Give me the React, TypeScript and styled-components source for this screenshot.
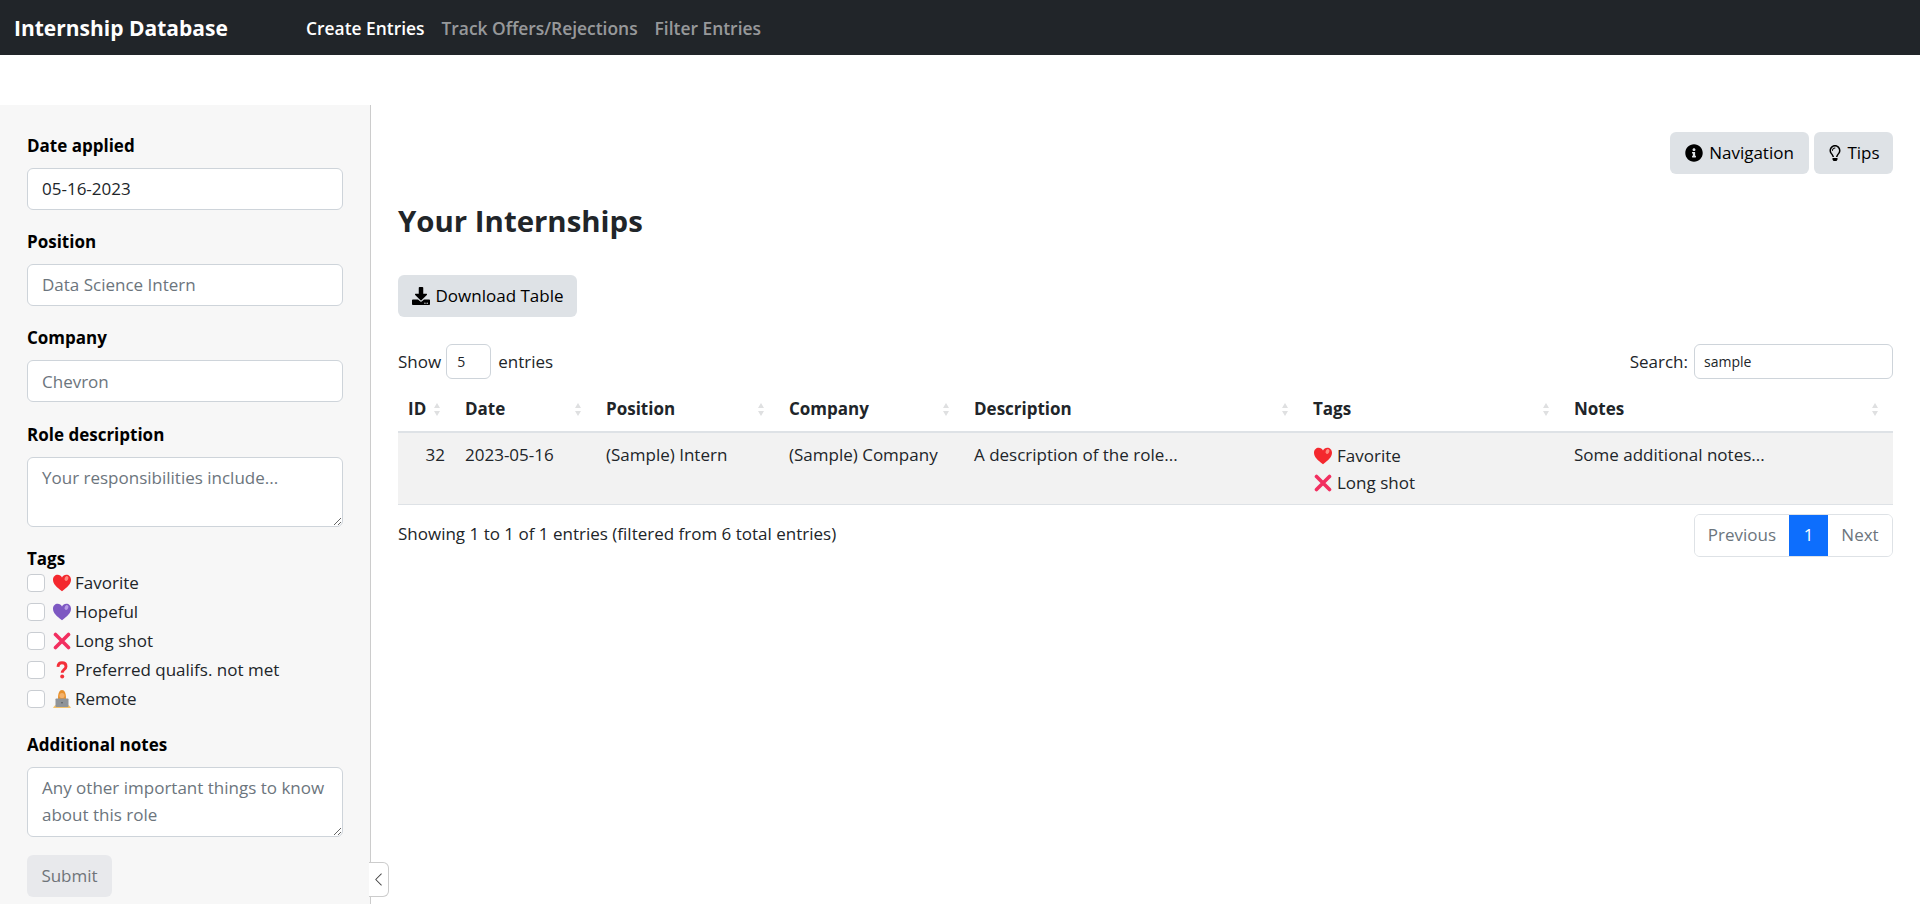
import React from 'react';
import styled, { createGlobalStyle } from 'styled-components';
import { FaDownload, FaInfoCircle, FaRegLightbulb } from 'react-icons/fa';
import { BsChevronLeft } from 'react-icons/bs';

const GlobalStyle = createGlobalStyle`
  html, body {
    margin: 0;
    height: 100%;
    background: #fff;
    overflow: hidden;
  }
  body {
    font-family: "Open Sans", "Noto Sans", sans-serif;
    font-size: 17px;
    line-height: 26px;
    color: #212529;
  }
  * { box-sizing: border-box; }
`;

const Navbar = styled.nav`
  display: flex;
  align-items: center;
  height: 55px;
  padding: 0 14px;
  background: #212529;
`;

const Brand = styled.span`
  width: 292px;
  font-size: 21px;
  font-weight: 700;
  color: #fff;
`;

const NavLink = styled.a<{ $active?: boolean }>`
  margin-right: 17px;
  font-size: 17.4px;
  font-weight: 600;
  color: ${({ $active }) => ($active ? '#fff' : 'rgba(255, 255, 255, 0.55)')};
`;

const Layout = styled.div`
  display: flex;
  height: 799px;
  margin-top: 50px;
`;

const Sidebar = styled.aside`
  position: relative;
  flex: 0 0 371px;
  padding: 27.5px 27px 0;
  background: #f7f7f7;
  border-right: 1px solid #ccc;
`;

const FieldLabel = styled.label`
  display: block;
  margin-bottom: 9px;
  font-size: 17px;
  font-weight: 700;
  color: #000;
`;

const Field = styled.div`
  margin-bottom: 19.4px;
`;

const TextInput = styled.input`
  display: block;
  width: 316px;
  height: 42px;
  padding: 0 14px;
  font: inherit;
  color: #212529;
  background: #fff;
  border: 1px solid #ced4da;
  border-radius: 6px;
  outline: none;

  &::placeholder { color: #6c757d; opacity: 1; }
`;

const TextArea = styled.textarea`
  display: block;
  width: 316px;
  height: 70px;
  padding: 6px 14px;
  font: inherit;
  line-height: 27px;
  color: #212529;
  background: #fff;
  border: 1px solid #ced4da;
  border-radius: 6px;
  outline: none;

  &::placeholder { color: #6c757d; opacity: 1; }
`;

const TagsTitle = styled.div`
  font-size: 17px;
  font-weight: 700;
  color: #000;
`;

const TagList = styled.div`
  margin-top: -4px;
  margin-bottom: -1.5px;
`;

const TagOption = styled.label`
  display: flex;
  align-items: center;
  height: 29.2px;
  color: #212529;
`;

const Check = styled.input.attrs({ type: 'checkbox' })`
  appearance: none;
  flex: none;
  width: 18px;
  height: 18px;
  margin: 0 8px 0 0;
  background: #fff;
  border: 1px solid #c9cdd2;
  border-radius: 4px;
`;

const EmojiSlot = styled.svg<{ $size: number }>`
  flex: none;
  width: ${({ $size }) => $size}px;
  height: ${({ $size }) => $size}px;
  margin-right: 4px;
`;

const SubmitButton = styled.button`
  display: block;
  width: 85px;
  height: 42px;
  margin-top: 18.4px;
  padding: 0;
  font: inherit;
  color: #6f7479;
  background: #e8e9ec;
  border: none;
  border-radius: 6px;
`;

const CollapseTab = styled.button`
  position: absolute;
  top: 757px;
  left: 369px;
  display: flex;
  align-items: center;
  justify-content: center;
  width: 20px;
  height: 35px;
  padding: 0;
  color: #444;
  background: #fff;
  border: 1px solid #ccc;
  border-left: none;
  border-radius: 0 6px 6px 0;
  font-size: 15px;
`;

const Main = styled.main`
  flex: 1;
  min-width: 0;
  padding: 27px 27px 0;
`;

const TopActions = styled.div`
  display: flex;
  justify-content: flex-end;
  gap: 5px;
`;

const GreyButton = styled.button<{ $width: number; $gap: number }>`
  display: inline-flex;
  align-items: center;
  justify-content: center;
  gap: ${({ $gap }) => $gap}px;
  width: ${({ $width }) => $width}px;
  height: 42px;
  padding: 0;
  font: inherit;
  color: #000;
  background: #dee2e6;
  border: none;
  border-radius: 6px;

  svg { flex: none; }
`;

const Heading = styled.h1`
  margin: 25px 0 0;
  font-size: 29.4px;
  line-height: 44px;
  font-weight: 700;
  color: #212529;
`;

const DownloadRow = styled.div`
  margin-top: 32px;
`;

const TableControls = styled.div`
  display: flex;
  align-items: center;
  justify-content: space-between;
  height: 35px;
  margin-top: 27px;
`;

const ControlGroup = styled.div`
  display: flex;
  align-items: center;
`;

const LengthSelect = styled.select`
  appearance: none;
  width: 45px;
  height: 35px;
  margin: 0 7px 0 5px;
  padding: 0 10px;
  font: inherit;
  font-size: 14px;
  color: #212529;
  background: #fff;
  border: 1px solid #ced4da;
  border-radius: 6px;
`;

const SearchInput = styled.input`
  width: 199px;
  height: 35px;
  margin-left: 6px;
  padding: 0 9px;
  font: inherit;
  font-size: 14px;
  color: #212529;
  background: #fff;
  border: 1px solid #ced4da;
  border-radius: 6px;
  outline: none;
`;

const Table = styled.table`
  width: 100%;
  margin-top: 8px;
  border-collapse: collapse;
  table-layout: fixed;
`;

const HeadCell = styled.th<{ $width: number }>`
  position: relative;
  width: ${({ $width }) => $width}px;
  height: 44px;
  padding: 9px 10px;
  text-align: left;
  font-size: 17px;
  font-weight: 700;
  border-bottom: 2px solid #dee2e6;

  &::before,
  &::after {
    content: '';
    position: absolute;
    right: 15px;
    width: 0;
    height: 0;
    border-left: 3.5px solid transparent;
    border-right: 3.5px solid transparent;
  }
  &::before {
    top: 16px;
    border-bottom: 5px solid #dfe0e1;
  }
  &::after {
    top: 24px;
    border-top: 5px solid #dfe0e1;
  }
`;

const BodyRow = styled.tr`
  background: #f2f2f2;
`;

const BodyCell = styled.td<{ $align?: string }>`
  height: 72px;
  padding: 9px 10px 7px;
  vertical-align: top;
  text-align: ${({ $align }) => $align || 'left'};
  border-bottom: 1px solid #dee2e6;
`;

const TagLine = styled.div`
  display: flex;
  align-items: center;
  height: 27px;
  padding-left: 1px;

  svg { margin-right: 5px; }
`;

const TableFooter = styled.div`
  display: flex;
  align-items: flex-start;
  justify-content: space-between;
  margin-top: 9px;
`;

const FooterInfo = styled.div`
  margin-top: 7px;
`;

const Pagination = styled.div`
  display: flex;
  height: 43px;
  border: 1px solid #dee2e6;
  border-radius: 6px;
  overflow: hidden;
`;

const PageItem = styled.span<{ $width: number; $active?: boolean }>`
  display: flex;
  align-items: center;
  justify-content: center;
  width: ${({ $width }) => $width}px;
  margin: ${({ $active }) => ($active ? '-1px 0' : '0')};
  color: ${({ $active }) => ($active ? '#fff' : '#6c757d')};
  background: ${({ $active }) => ($active ? '#0d6efd' : '#fff')};
`;

type EmojiKind = 'heart' | 'purple' | 'cross' | 'question' | 'remote';

const heartPath =
  'M9 16.6C4.2 12.9 1 10 1 6.3 1 3.7 2.9 1.9 5.2 1.9c1.6 0 3 .8 3.8 2.3.8-1.5 2.2-2.3 3.8-2.3C15.1 1.9 17 3.7 17 6.3c0 3.7-3.2 6.6-8 10.3z';

const TagEmoji = ({ kind, size = 18 }: { kind: EmojiKind; size?: number }) => {
  const isHeart = kind === 'heart' || kind === 'purple';
  return (
    <EmojiSlot $size={size} viewBox={isHeart ? '1 1.2 16 16' : '0 0 18 18'} aria-hidden="true">
      {kind === 'heart' && (
        <>
          <path d={heartPath} fill="#f4282e" />
          <ellipse cx="13" cy="5.2" rx="1.6" ry="2.2" fill="#ff8a80" transform="rotate(25 13 5.2)" />
        </>
      )}
      {kind === 'purple' && (
        <>
          <path d={heartPath} fill="#7d58c2" />
          <ellipse cx="13" cy="5.2" rx="1.6" ry="2.2" fill="#b79be6" transform="rotate(25 13 5.2)" />
        </>
      )}
      {kind === 'cross' && (
        <path d="M2.5 2.5l13 13M15.5 2.5l-13 13" stroke="#f22f60" strokeWidth="3.6" strokeLinecap="round" />
      )}
      {kind === 'question' && (
        <>
          <path d="M5 5.8C5.2 3.2 6.8 1.8 9 1.8c2.4 0 4 1.4 4 3.6 0 3-3.8 3.2-3.8 6.4" fill="none" stroke="#f4303a" strokeWidth="2.9" />
          <circle cx="9.2" cy="15.6" r="2" fill="#f4303a" />
        </>
      )}
      {kind === 'remote' && (
        <>
          <path d="M5 8c0-4.5 1.4-8 4-8s4 3.5 4 8v2H5z" fill="#e8912d" />
          <circle cx="9" cy="5.5" r="2.6" fill="#f4b26b" />
          <path d="M0 18c1-2 2-3 3.5-3h11c1.5 0 2.5 1 3.5 3z" fill="#f3c26b" />
          <rect x="2.5" y="8.5" width="13" height="8.5" rx="0.8" fill="#8f9499" />
          <circle cx="9" cy="12.8" r="0.8" fill="#4f5357" />
        </>
      )}
    </EmojiSlot>
  );
};

const tagOptions: { kind: EmojiKind; label: string }[] = [
  { kind: 'heart', label: 'Favorite' },
  { kind: 'purple', label: 'Hopeful' },
  { kind: 'cross', label: 'Long shot' },
  { kind: 'question', label: 'Preferred qualifs. not met' },
  { kind: 'remote', label: 'Remote' },
];

const columns = [
  { title: 'ID', width: 57 },
  { title: 'Date', width: 141 },
  { title: 'Position', width: 183 },
  { title: 'Company', width: 185 },
  { title: 'Description', width: 339 },
  { title: 'Tags', width: 261 },
  { title: 'Notes', width: 329 },
];

const App: React.FC = () => (
  <>
    <GlobalStyle />
    <Navbar>
      <Brand>Internship Database</Brand>
      <NavLink $active>Create Entries</NavLink>
      <NavLink>Track Offers/Rejections</NavLink>
      <NavLink>Filter Entries</NavLink>
    </Navbar>
    <Layout>
      <Sidebar>
        <Field>
          <FieldLabel>Date applied</FieldLabel>
          <TextInput defaultValue="05-16-2023" />
        </Field>
        <Field>
          <FieldLabel>Position</FieldLabel>
          <TextInput placeholder="Data Science Intern" />
        </Field>
        <Field>
          <FieldLabel>Company</FieldLabel>
          <TextInput placeholder="Chevron" />
        </Field>
        <Field>
          <FieldLabel>Role description</FieldLabel>
          <TextArea placeholder="Your responsibilities include..." />
        </Field>
        <Field>
          <TagsTitle>Tags</TagsTitle>
          <TagList>
            {tagOptions.map((tag) => (
              <TagOption key={tag.label}>
                <Check />
                <TagEmoji kind={tag.kind} />
                {tag.label}
              </TagOption>
            ))}
          </TagList>
        </Field>
        <FieldLabel>Additional notes</FieldLabel>
        <TextArea placeholder="Any other important things to know about this role" />
        <SubmitButton>Submit</SubmitButton>
        <CollapseTab aria-label="Collapse sidebar">
          <BsChevronLeft />
        </CollapseTab>
      </Sidebar>
      <Main>
        <TopActions>
          <GreyButton $width={139} $gap={6}>
            <FaInfoCircle size={18} />
            Navigation
          </GreyButton>
          <GreyButton $width={79} $gap={4}>
            <FaRegLightbulb size={16} />
            Tips
          </GreyButton>
        </TopActions>
        <Heading>Your Internships</Heading>
        <DownloadRow>
          <GreyButton $width={179} $gap={6}>
            <FaDownload size={18} />
            Download Table
          </GreyButton>
        </DownloadRow>
        <TableControls>
          <ControlGroup>
            Show
            <LengthSelect defaultValue="5">
              <option value="5">5</option>
            </LengthSelect>
            entries
          </ControlGroup>
          <ControlGroup>
            Search:
            <SearchInput defaultValue="sample" />
          </ControlGroup>
        </TableControls>
        <Table>
          <thead>
            <tr>
              {columns.map((col) => (
                <HeadCell key={col.title} $width={col.width}>
                  {col.title}
                </HeadCell>
              ))}
            </tr>
          </thead>
          <tbody>
            <BodyRow>
              <BodyCell $align="right">32</BodyCell>
              <BodyCell>2023-05-16</BodyCell>
              <BodyCell>(Sample) Intern</BodyCell>
              <BodyCell>(Sample) Company</BodyCell>
              <BodyCell>A description of the role...</BodyCell>
              <BodyCell>
                <TagLine>
                  <TagEmoji kind="heart" />
                  Favorite
                </TagLine>
                <TagLine>
                  <TagEmoji kind="cross" />
                  Long shot
                </TagLine>
              </BodyCell>
              <BodyCell>Some additional notes...</BodyCell>
            </BodyRow>
          </tbody>
        </Table>
        <TableFooter>
          <FooterInfo>Showing 1 to 1 of 1 entries (filtered from 6 total entries)</FooterInfo>
          <Pagination>
            <PageItem $width={94}>Previous</PageItem>
            <PageItem $width={39} $active>1</PageItem>
            <PageItem $width={64}>Next</PageItem>
          </Pagination>
        </TableFooter>
      </Main>
    </Layout>
  </>
);

export default App;
